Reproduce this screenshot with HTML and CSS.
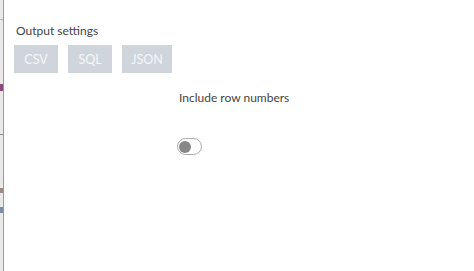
FILE: index.html
```html
<!DOCTYPE html>
<html>
<head>
<meta charset="utf-8">
<link rel="stylesheet" href="styles.css">
</head>
<body>
<div class="app">
  <div class="edge">
    <span class="mark m1"></span>
    <span class="mark m2"></span>
    <span class="mark m3"></span>
    <span class="mark m4"></span>
    <span class="mark m5"></span>
  </div>
  <main class="panel">
    <h2 class="title">Output settings</h2>
    <div class="formats">
      <button class="fmt">CSV</button>
      <button class="fmt">SQL</button>
      <button class="fmt">JSON</button>
    </div>
    <div class="option">
      <label class="opt-label">Include row numbers</label>
      <span class="toggle"><span class="knob"></span></span>
    </div>
  </main>
</div>
</body>
</html>
```
FILE: styles.css
```css
html, body {
  margin: 0;
  padding: 0;
  background: #ffffff;
}
.app {
  display: flex;
  width: 474px;
  height: 271px;
  font-family: Lato, "Open Sans", sans-serif;
}
.edge {
  width: 3px;
  background: #e9e9e9;
  border-right: 1px solid #9a9a9a;
  position: relative;
  flex: none;
}
.mark {
  position: absolute;
  left: 0;
  width: 3px;
}
.m1 { top: 19px; height: 1px; background: #b8b8b8; }
.m2 { top: 84px; height: 7px; background: #8a4a78; }
.m3 { top: 134px; height: 1px; background: #8c8c8c; }
.m4 { top: 188px; height: 5px; background: #9a8c84; }
.m5 { top: 207px; height: 6px; background: #7c8ca4; }
.panel {
  flex: 1;
  padding: 22px 0 0 10px;
}
.title {
  margin: 0 0 0 2px;
  font-size: 12px;
  font-weight: 400;
  color: #444;
  line-height: 18px;
}
.formats {
  display: flex;
  gap: 10px;
  margin-top: 5px;
}
.fmt {
  border: none;
  background: #d0d5dc;
  color: #f4f6f8;
  font-family: inherit;
  font-size: 12.5px;
  height: 28px;
  width: 44px;
  padding: 0;
  margin: 0;
}
.fmt:last-child { width: 50px; }
.option {
  margin-left: 165px;
  margin-top: 17px;
  display: flex;
  flex-direction: column;
  align-items: flex-start;
}
.opt-label {
  font-size: 12px;
  color: #444;
  line-height: 16px;
}
.toggle {
  margin-left: -2px;
  margin-top: 32px;
  width: 22px;
  height: 15px;
  border: 1px solid #aaa;
  border-radius: 9px;
  display: flex;
  align-items: center;
  padding-left: 1px;
  box-sizing: content-box;
}
.knob {
  width: 12px;
  height: 12px;
  border-radius: 50%;
  background: #888;
}
```
